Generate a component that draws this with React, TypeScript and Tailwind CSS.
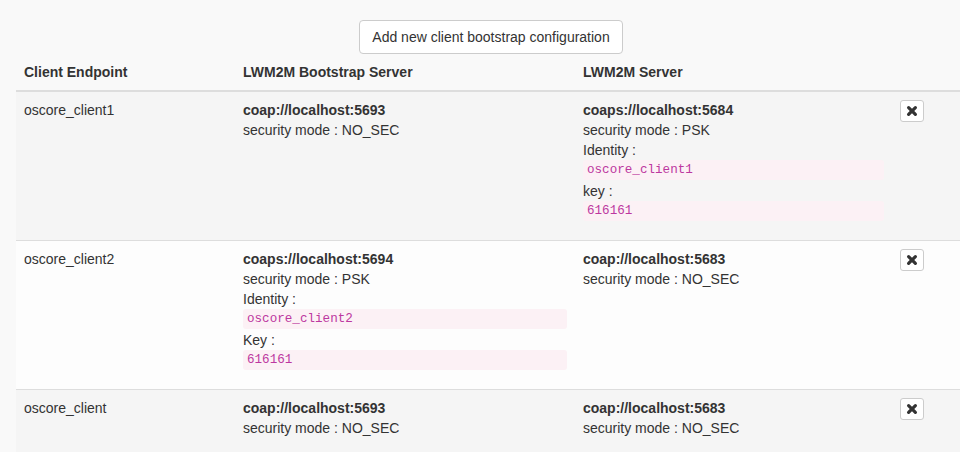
import React from "react";

type Server = {
  uri: string;
  mode: string;
  identity?: string;
  key?: string;
  keyLabel?: string;
};

type Row = { endpoint: string; bs: Server; dm: Server };

const rows: Row[] = [
  {
    endpoint: "oscore_client1",
    bs: { uri: "coap://localhost:5693", mode: "NO_SEC" },
    dm: {
      uri: "coaps://localhost:5684",
      mode: "PSK",
      identity: "oscore_client1",
      key: "616161",
      keyLabel: "key :",
    },
  },
  {
    endpoint: "oscore_client2",
    bs: {
      uri: "coaps://localhost:5694",
      mode: "PSK",
      identity: "oscore_client2",
      key: "616161",
      keyLabel: "Key :",
    },
    dm: { uri: "coap://localhost:5683", mode: "NO_SEC" },
  },
  {
    endpoint: "oscore_client",
    bs: { uri: "coap://localhost:5693", mode: "NO_SEC" },
    dm: { uri: "coap://localhost:5683", mode: "NO_SEC" },
  },
];

function Code({ children }: { children: React.ReactNode }) {
  return (
    <div className="h-[20px] mb-px bg-[#fcf1f5] px-[4px] text-[12.6px] leading-[20px] text-[#bd38a0] font-['Liberation_Mono',monospace] rounded-[3px]">
      {children}
    </div>
  );
}

function ServerCell({ s }: { s: Server }) {
  return (
    <div className="flex flex-col">
      <div className="font-bold">{s.uri}</div>
      <div>security mode : {s.mode}</div>
      {s.identity && (
        <>
          <div>Identity :</div>
          <Code>{s.identity}</Code>
          <div>{s.keyLabel}</div>
          <Code>{s.key}</Code>
          <div className="h-[10px]" />
        </>
      )}
    </div>
  );
}

function RemoveIcon() {
  return (
    <svg width="12" height="12" viewBox="0 0 12 12" aria-hidden="true">
      <path
        d="M2.6 2.6 L9.4 9.4 M9.4 2.6 L2.6 9.4"
        stroke="#333"
        strokeWidth="3.2"
        strokeLinecap="round"
      />
    </svg>
  );
}

export default function App() {
  return (
    <div className="min-h-[452px] w-full overflow-hidden bg-[#f9f9f9] font-['Liberation_Sans',Arial,sans-serif] text-[14px] leading-[20px] text-[#333]">
      <div className="w-[950px] ml-[16px] pt-[20px]">
        <div className="flex justify-center">
          <button className="h-[34px] px-[12px] border border-[#ccc] rounded-[4px] bg-white text-[14px] leading-[20px] text-[#333]">
            Add new client bootstrap configuration
          </button>
        </div>
        <div className="grid grid-cols-[219px_340px_317px_74px] border-b-2 border-[#ddd] font-bold">
          <div className="px-[8px] py-[8px]">Client Endpoint</div>
          <div className="px-[8px] py-[8px]">LWM2M Bootstrap Server</div>
          <div className="px-[8px] py-[8px]">LWM2M Server</div>
          <div className="px-[8px] py-[8px]"></div>
        </div>
        {rows.map((r, i) => (
          <div
            key={r.endpoint}
            className={
              "grid grid-cols-[219px_340px_317px_74px] border-[#ddd] " +
              (i > 0 ? "border-t " : "") +
              (i % 2 === 0 ? "bg-[#f5f5f5]" : "bg-[#fdfdfd]") +
              (i === rows.length - 1 ? " min-h-[70px]" : "")
            }
          >
            <div className="p-[8px]">{r.endpoint}</div>
            <div className="p-[8px]">
              <ServerCell s={r.bs} />
            </div>
            <div className="p-[8px]">
              <ServerCell s={r.dm} />
            </div>
            <div className="p-[8px]">
              <button className="flex h-[22px] w-[24px] items-center justify-center border border-[#ccc] rounded-[3px] bg-white">
                <RemoveIcon />
              </button>
            </div>
          </div>
        ))}
      </div>
    </div>
  );
}
